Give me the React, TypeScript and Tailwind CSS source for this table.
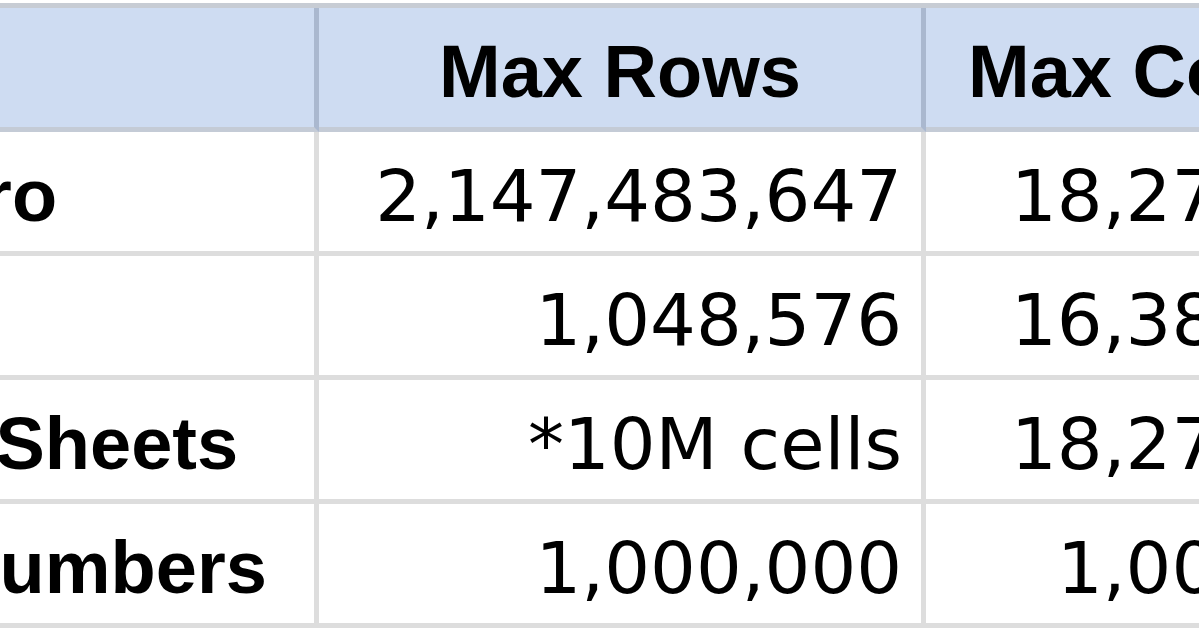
import React from "react";

const label = "font-['Liberation_Sans',Arial,sans-serif] font-bold text-[74px] leading-none text-black";
const num = "font-['DejaVu_Sans',Verdana,sans-serif] text-[72px] leading-none text-black";

const rows = [
  { name: "Row Zero", rows: "2,147,483,647", cols: "18,278" },
  { name: "Excel", rows: "1,048,576", cols: "16,384" },
  { name: "Google Sheets", rows: "*10M cells", cols: "18,278" },
  { name: "Apple Numbers", rows: "1,000,000", cols: "1,000" },
];

export default function App() {
  return (
    <div className="w-[1199px] h-[630px] overflow-hidden bg-white">
      <div className="ml-[-290px] mt-[3px] w-[1580px]">
        {/* header */}
        <div className="flex border-t-[5px] border-[#c7ccd4] bg-[#cedcf2]">
          <div className="w-[609px] h-[124px] shrink-0 border-r-[5px] border-b-[5px] border-r-[#aab8cf] border-b-[#c4cbd6]" />
          <div className={`w-[607px] h-[124px] shrink-0 border-r-[5px] border-b-[5px] border-r-[#aab8cf] border-b-[#c4cbd6] flex items-center justify-center pt-[8px] ${label}`}>
            Max Rows
          </div>
          <div className={`w-[364px] h-[124px] shrink-0 border-b-[5px] border-b-[#c4cbd6] flex items-center pl-[42px] pt-[8px] whitespace-nowrap overflow-hidden ${label}`}>
            Max Columns
          </div>
        </div>
        {rows.map((r) => (
          <div key={r.name} className="flex">
            <div className={`w-[609px] h-[124px] shrink-0 border-r-[5px] border-b-[5px] border-[#dddddd] flex items-center pl-[10px] pt-[8px] whitespace-nowrap ${label}`}>
              {r.name}
            </div>
            <div className={`w-[607px] h-[124px] shrink-0 border-r-[5px] border-b-[5px] border-[#dddddd] flex items-center justify-end pr-[19px] pt-[8px] whitespace-nowrap ${num}`}>
              {r.rows}
            </div>
            <div className={`w-[364px] h-[124px] shrink-0 border-r-[5px] border-b-[5px] border-[#dddddd] flex items-center justify-end pr-[22px] pt-[8px] whitespace-nowrap ${num}`}>
              {r.cols}
            </div>
          </div>
        ))}
      </div>
    </div>
  );
}
